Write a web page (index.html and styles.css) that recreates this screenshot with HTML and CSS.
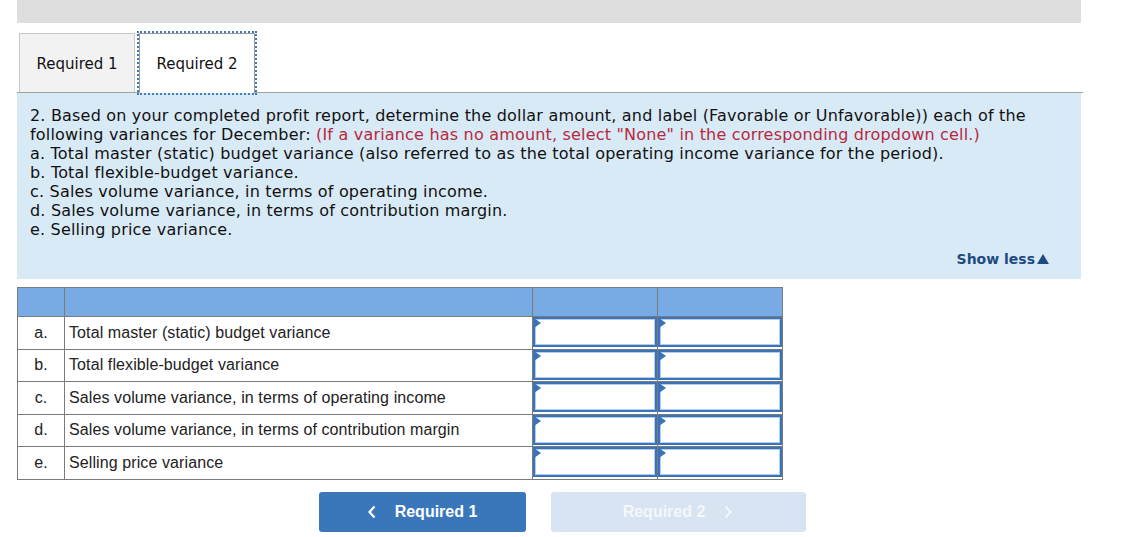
FILE: index.html
```html
<!DOCTYPE html>
<html>
<head>
<meta charset="utf-8">
<link rel="stylesheet" href="styles.css">
</head>
<body>
<div class="page">
  <div class="topbar"></div>
  <div class="tabs">
    <div class="tab tab-inactive">Required 1</div>
    <div class="tab tab-active">Required 2</div>
  </div>
  <div class="panel">
    <div class="question">
      <div>2. Based on your completed profit report, determine the dollar amount, and label (Favorable or Unfavorable)) each of the following variances for December: <span class="red">(If a variance has no amount, select "None" in the corresponding dropdown cell.)</span></div>
      <div>a. Total master (static) budget variance (also referred to as the total operating income variance for the period).</div>
      <div>b. Total flexible-budget variance.</div>
      <div>c. Sales volume variance, in terms of operating income.</div>
      <div>d. Sales volume variance, in terms of contribution margin.</div>
      <div>e. Selling price variance.</div>
    </div>
    <div class="showless">Show less<span class="tri"></span></div>
  </div>
  <table class="grid">
    <colgroup>
      <col class="c1"><col class="c2"><col class="c3"><col class="c4">
    </colgroup>
    <thead>
      <tr><th></th><th></th><th></th><th></th></tr>
    </thead>
    <tbody>
      <tr><td class="lbl">a.</td><td class="desc">Total master (static) budget variance</td><td class="inp"><div class="box"><span class="flag"></span></div></td><td class="inp"><div class="box"><span class="flag"></span></div></td></tr>
      <tr><td class="lbl">b.</td><td class="desc">Total flexible-budget variance</td><td class="inp"><div class="box"><span class="flag"></span></div></td><td class="inp"><div class="box"><span class="flag"></span></div></td></tr>
      <tr><td class="lbl">c.</td><td class="desc">Sales volume variance, in terms of operating income</td><td class="inp"><div class="box"><span class="flag"></span></div></td><td class="inp"><div class="box"><span class="flag"></span></div></td></tr>
      <tr><td class="lbl">d.</td><td class="desc">Sales volume variance, in terms of contribution margin</td><td class="inp"><div class="box"><span class="flag"></span></div></td><td class="inp"><div class="box"><span class="flag"></span></div></td></tr>
      <tr><td class="lbl">e.</td><td class="desc">Selling price variance</td><td class="inp"><div class="box"><span class="flag"></span></div></td><td class="inp"><div class="box"><span class="flag"></span></div></td></tr>
    </tbody>
  </table>
  <div class="nav">
    <div class="btn btn-prev">
      <svg class="chev" width="10" height="14" viewBox="0 0 10 14"><polyline points="7.5,1.5 2.5,7 7.5,12.5" fill="none" stroke="#fff" stroke-width="2.2"/></svg>
      <span>Required 1</span>
    </div>
    <div class="btn btn-next">
      <span>Required 2</span>
      <svg class="chev" width="10" height="14" viewBox="0 0 10 14"><polyline points="2.5,1.5 7.5,7 2.5,12.5" fill="none" stroke="#f3f7fc" stroke-width="2.2"/></svg>
    </div>
  </div>
</div>
</body>
</html>
```
FILE: styles.css
```css
html, body {
  margin: 0;
  padding: 0;
  background: #fff;
}
.page {
  width: 1128px;
  font-family: "DejaVu Sans", Verdana, sans-serif;
}
.topbar {
  margin-left: 17px;
  width: 1064px;
  height: 23px;
  background: #dedede;
}
.tabs {
  margin-left: 17px;
  width: 1064px;
  height: 59px;
  margin-top: 10px;
  border-bottom: 1px solid #a3a3a3;
  display: flex;
  align-items: flex-end;
  gap: 4px;
  padding-left: 2px;
  box-sizing: content-box;
}
.tab {
  box-sizing: border-box;
  width: 116px;
  height: 59px;
  display: flex;
  align-items: center;
  justify-content: center;
  font-size: 15px;
  color: #111;
  padding-top: 1px;
}
.tab-inactive {
  background: #f2f2f2;
  border: 1px solid #c8c8c8;
  border-bottom: none;
}
.tab-active {
  background: #fff;
  border: 1px solid #9a9a9a;
  border-bottom: none;
  outline: 2px dotted #3e78bf;
  outline-offset: 0;
  position: relative;
  z-index: 1;
  height: 60px;
  margin-bottom: -1px;
  padding-top: 0;
}
.panel {
  margin-left: 17px;
  width: 1064px;
  height: 186px;
  background: #d9eaf7;
  box-sizing: border-box;
  padding: 13px 13px 0 13px;
  position: relative;
}
.question {
  font-size: 16px;
  line-height: 19px;
  letter-spacing: 0.19px;
  color: #111;
}
.red {
  color: #b8283c;
}
.showless {
  position: absolute;
  right: 32px;
  top: 158px;
  font-size: 14px;
  font-weight: bold;
  color: #1f4b80;
  display: flex;
  align-items: center;
  gap: 2px;
}
.tri {
  width: 0;
  height: 0;
  border-left: 6px solid transparent;
  border-right: 6px solid transparent;
  border-bottom: 10px solid #1f4b80;
  margin-top: -1px;
}
.grid {
  margin-left: 17px;
  margin-top: 8px;
  border-collapse: collapse;
  font-family: "Liberation Sans", Arial, sans-serif;
  font-size: 16px;
  letter-spacing: 0.1px;
  color: #222;
  table-layout: fixed;
  width: 766px;
}
.c1 { width: 47px; }
.c2 { width: 468px; }
.c3 { width: 125px; }
.c4 { width: 125px; }
.grid th, .grid td {
  border: 1px solid #7b7b7b;
  padding: 0;
}
.grid th {
  background: #78abe3;
  height: 28px;
}
.grid td {
  height: 31.5px;
}
.lbl {
  text-align: center;
}
.desc {
  padding-left: 4px !important;
  white-space: nowrap;
}
.inp {
  vertical-align: top;
}
.box {
  position: relative;
  height: 30px;
  box-sizing: border-box;
  border: 2px solid #3a73b9;
  box-shadow: inset 0 0 0 1px #b1cdef;
  background: #fff;
  margin-bottom: 1px;
}
.flag {
  position: absolute;
  left: -1px;
  top: -1px;
  width: 0;
  height: 0;
  border-left: 7px solid #3a73b9;
  border-top: 5px solid transparent;
  border-bottom: 5px solid transparent;
}
.nav {
  display: flex;
  justify-content: center;
  gap: 25px;
  margin-top: 12px;
  padding-right: 4px;
}
.btn {
  height: 40px;
  border-radius: 3px;
  display: flex;
  align-items: center;
  justify-content: center;
  font-family: "Liberation Sans", Arial, sans-serif;
  font-weight: bold;
  font-size: 16px;
  gap: 18px;
}
.btn-prev {
  width: 207px;
  background: #3a77ba;
  color: #fff;
}
.btn-next {
  width: 255px;
  background: #d8e4f1;
  color: #f4f7fb;
}
.chev {
  display: block;
}
```
